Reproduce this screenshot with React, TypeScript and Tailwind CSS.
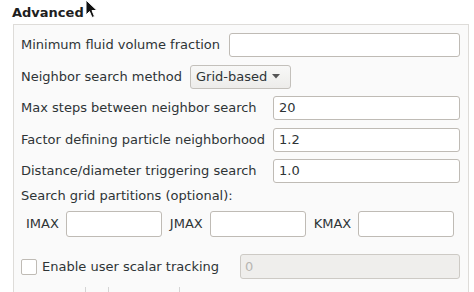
const font = { fontFamily: '"DejaVu Sans", "Liberation Sans", sans-serif' };

function Field({ label, value }: { label: string; value?: string }) {
  return (
    <div className="flex items-center gap-[9px] h-[24px]">
      <span className="whitespace-nowrap">{label}</span>
      <div className="flex-1 h-full bg-white border border-[#bfbbb5] rounded-[3px] px-[5px] flex items-center">
        {value}
      </div>
    </div>
  );
}

function GridRow({ label, value }: { label: string; value: string }) {
  return (
    <>
      <span className="whitespace-nowrap">{label}</span>
      <div className="h-[24px] bg-white border border-[#bfbbb5] rounded-[3px] px-[5px] flex items-center">
        {value}
      </div>
    </>
  );
}

function SmallBox({ label }: { label: string }) {
  return (
    <div className="flex items-center gap-[7px]">
      <span>{label}</span>
      <div className="w-[96px] h-[26px] bg-white border border-[#bfbbb5] rounded-[3px]" />
    </div>
  );
}

export default function App() {
  return (
    <div
      className="relative w-[474px] h-[292px] overflow-hidden bg-white text-[13px] text-[#2e3436]"
      style={font}
    >
      {/* cursor */}
      <svg className="absolute left-[85px] top-[-1px]" width="14" height="20" viewBox="0 0 14 20">
        <path d="M1 1 L1 16 L4.5 12.5 L7 18.5 L9.5 17.5 L7 11.5 L12 11.5 Z" fill="#111" stroke="#fff" strokeWidth="1" />
      </svg>

      <div className="px-[12px] pt-[4px] font-bold text-[#1e1e1e] text-[13px] leading-[18px]">Advanced</div>

      <div className="ml-[13px] mr-[5px] mt-[2px] border border-[#dedcd9] bg-[#fafafa] h-[300px] pl-[7px] pr-[8px] pt-[8px]">
        <div className="flex flex-col gap-[7.5px]">
          <Field label="Minimum fluid volume fraction" />
          <div className="flex items-center gap-[8px] h-[24px]">
            <span>Neighbor search method</span>
            <div className="h-full w-[101px] flex items-center justify-between pl-[5px] pr-[10px] border border-[#c3c0bb] rounded-[3px] bg-gradient-to-b from-[#f8f8f7] to-[#edecea]">
              <span>Grid-based</span>
              <svg width="8" height="5" viewBox="0 0 8 5">
                <path d="M0 0 L8 0 L4 4.5 Z" fill="#555" />
              </svg>
            </div>
          </div>
          <div className="grid grid-cols-[auto_1fr] items-center gap-x-[8px] gap-y-[7.5px]">
            <GridRow label="Max steps between neighbor search" value="20" />
            <GridRow label="Factor defining particle neighborhood" value="1.2" />
            <GridRow label="Distance/diameter triggering search" value="1.0" />
          </div>
        </div>

        <div className="mt-[5px] leading-[16px]">Search grid partitions (optional):</div>

        <div className="mt-[7px] flex items-center gap-[8px] pl-[5px]">
          <SmallBox label="IMAX" />
          <SmallBox label="JMAX" />
          <SmallBox label="KMAX" />
        </div>

        <div className="mt-[17px] flex items-center">
          <div className="w-[16px] h-[16px] border border-[#bfbbb5] rounded-[2px] bg-white" />
          <span className="ml-[5px]">Enable user scalar tracking</span>
          <div className="ml-auto w-[220px] h-[25px] border border-[#cdcac5] rounded-[3px] bg-[#efeeec] text-[#b8b6b2] px-[4px] flex items-center">
            0
          </div>
        </div>

        <div className="mt-[8px] flex pl-[64px]">
          <span className="w-px h-[6px] bg-[#d4d4d4]" />
          <span className="w-px h-[6px] bg-[#d4d4d4] ml-[22px]" />
          <span className="w-px h-[6px] bg-[#d4d4d4] ml-[70px]" />
        </div>
      </div>
    </div>
  );
}
